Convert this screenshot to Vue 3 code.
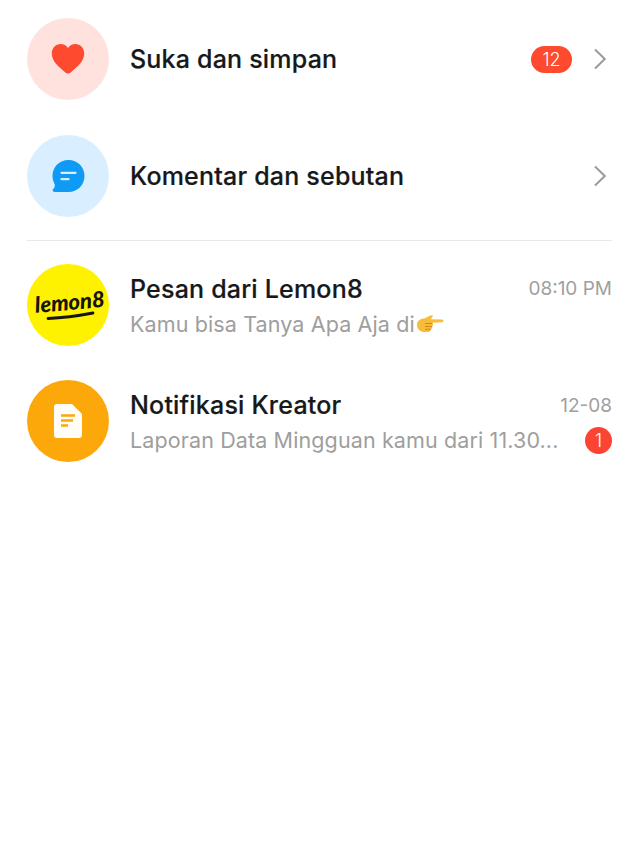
<script setup>
const shortcuts = [
  { title: 'Suka dan simpan', kind: 'like', badge: '12' },
  { title: 'Komentar dan sebutan', kind: 'comment' },
]
</script>

<template>
  <div class="page">
    <section class="group">
      <div v-for="item in shortcuts" :key="item.title" class="row">
        <div class="avatar" :class="item.kind">
          <svg v-if="item.kind === 'like'" width="34" height="32" viewBox="0 0 36 34">
            <path d="M18 32.500C16.800 32.500 15.600 31.700 14 30.300 7.500 24.800.8 19.300.8 11.200.8 5.300 5 1 10.200 1c3.300 0 6 1.500 7.800 4.200C19.800 2.500 22.500 1 25.800 1 31 1 35.200 5.300 35.200 11.200c0 8.100-6.700 13.600-13.200 19.100-1.600 1.400-2.800 2.200-4 2.200z" fill="#fe4a2f" />
          </svg>
          <svg v-else width="34" height="34" viewBox="0 0 34 34">
            <path d="M17.500 1C26.600 1 33.500 7.900 33.500 17S26.600 33 17.500 33H3.500C1.800 33 1 31.300 2.200 30.100 3.600 28.700 4.100 27 3.700 25.200 2.300 22.800 1.500 20 1.500 17 1.500 7.900 8.400 1 17.500 1z" fill="#0f9bf5" />
            <path d="M10.500 13.800h14M10.500 20.200h7" stroke="#d9eeff" stroke-width="2.300" stroke-linecap="round" />
          </svg>
        </div>
        <div class="title">{{ item.title }}</div>
        <span v-if="item.badge" class="badge">{{ item.badge }}</span>
        <svg class="chevron" width="14" height="22" viewBox="0 0 14 22">
          <path d="M2 1.500l9.800 9.500L2 20.500" fill="none" stroke="#9a9a9a" stroke-width="2" />
        </svg>
      </div>
    </section>

    <div class="divider"></div>

    <section class="group">
      <div class="row">
        <div class="avatar lemon">
          <svg width="82" height="82" viewBox="0 0 82 82">
            <g transform="rotate(-5 41 41)">
              <text x="8" y="46" class="logo-text">lemon8</text>
            </g>
            <path d="M21 54.500C33 54 50 52 66 49" fill="none" stroke="#17140a" stroke-width="2.800" stroke-linecap="round" />
          </svg>
        </div>
        <div class="body">
          <div class="line">
            <div class="title">Pesan dari Lemon8</div>
            <span class="time">08:10 PM</span>
          </div>
          <div class="line">
            <div class="preview">Kamu bisa Tanya Apa Aja di</div>
            <svg class="point" width="28" height="20" viewBox="0 0 28 20">
              <path d="M1 9.500C2 6 5 4.500 8.500 4.500 11 3.200 13.500 1.500 15.500 1.200 17 1 17.500 2.500 16 3.500L14.800 5.200 26 5.500C28 5.700 28 8 26 8.200L16.500 8.800C17.500 10 17.300 11.500 16.300 12 16.800 13.500 16 14.800 15 15 15 16.800 13.800 18 12 18H8C3.500 18 .5 14 1 9.500z" fill="#f7bd3a" />
              <path d="M9 9.500h7M9 12.500h7M9 15.300h6" stroke="#d08a1c" stroke-width="1" fill="none" />
            </svg>
          </div>
        </div>
      </div>

      <div class="row">
        <div class="avatar creator">
          <svg width="28" height="34" viewBox="0 0 28 34">
            <path d="M3 0h15l10 10v21a3 3 0 0 1-3 3H3a3 3 0 0 1-3-3V3a3 3 0 0 1 3-3z" fill="#fffdf8" />
            <path d="M7 11.500h14M7 16.500h12M7 21.500h7" stroke="#fda80a" stroke-width="2.400" fill="none" />
          </svg>
        </div>
        <div class="body">
          <div class="line">
            <div class="title">Notifikasi Kreator</div>
            <span class="time">12-08</span>
          </div>
          <div class="line">
            <div class="preview clip">Laporan Data Mingguan kamu dari 11.30...</div>
            <span class="dot">1</span>
          </div>
        </div>
      </div>
    </section>
  </div>
</template>

<style scoped>
.page {
  height: 856px;
  padding: 1px 28px 0 27px;
  box-sizing: border-box;
  background: #fff;
  font-family: Inter, "Liberation Sans", sans-serif;
  color: #16181a;
}

.group {
  display: flex;
  flex-direction: column;
}

.row {
  height: 116.500px;
  display: flex;
  align-items: center;
}

.avatar {
  width: 82px;
  height: 82px;
  flex-shrink: 0;
  border-radius: 50%;
  display: flex;
  align-items: center;
  justify-content: center;
  margin-right: 21px;
}

.like {
  background: #ffe2de;
}

.comment {
  background: #d9eeff;
}

.lemon {
  background: #fff200;
}

.creator {
  background: #fda80a;
}

.logo-text {
  font-family: Lato, sans-serif;
  font-size: 22px;
  font-weight: 900;
  font-style: italic;
  fill: #17140a;
}

.title {
  flex: 1;
  font-size: 25px;
  font-weight: 500;
  letter-spacing: 0.2px;
  line-height: 32px;
  -webkit-text-stroke: 0.2px #16181a;
}

.badge {
  width: 41px;
  height: 27px;
  border-radius: 14px;
  background: #fe4a2f;
  color: #fff;
  font-size: 18px;
  font-weight: 300;
  line-height: 27px;
  text-align: center;
  margin-right: 21px;
}

.chevron {
  margin-right: 5px;
}

.divider {
  height: 1px;
  background: #e8e8e8;
  margin-top: 6px;
  margin-bottom: 5.500px;
}

.body {
  flex: 1;
  min-width: 0;
  display: flex;
  flex-direction: column;
  gap: 3px;
  padding-top: 3px;
}

.line {
  display: flex;
  align-items: center;
  height: 32px;
}

.time {
  font-size: 19px;
  color: #a0a0a0;
}

.preview {
  font-size: 21.500px;
  letter-spacing: 0.12px;
  color: #9e9e9e;
  white-space: nowrap;
}

.clip {
  flex: 1;
}

.point {
  margin-left: 1px;
}

.dot {
  width: 27px;
  height: 27px;
  border-radius: 50%;
  background: #fb4433;
  color: #fff;
  font-size: 18px;
  font-weight: 300;
  line-height: 27px;
  text-align: center;
}
</style>
